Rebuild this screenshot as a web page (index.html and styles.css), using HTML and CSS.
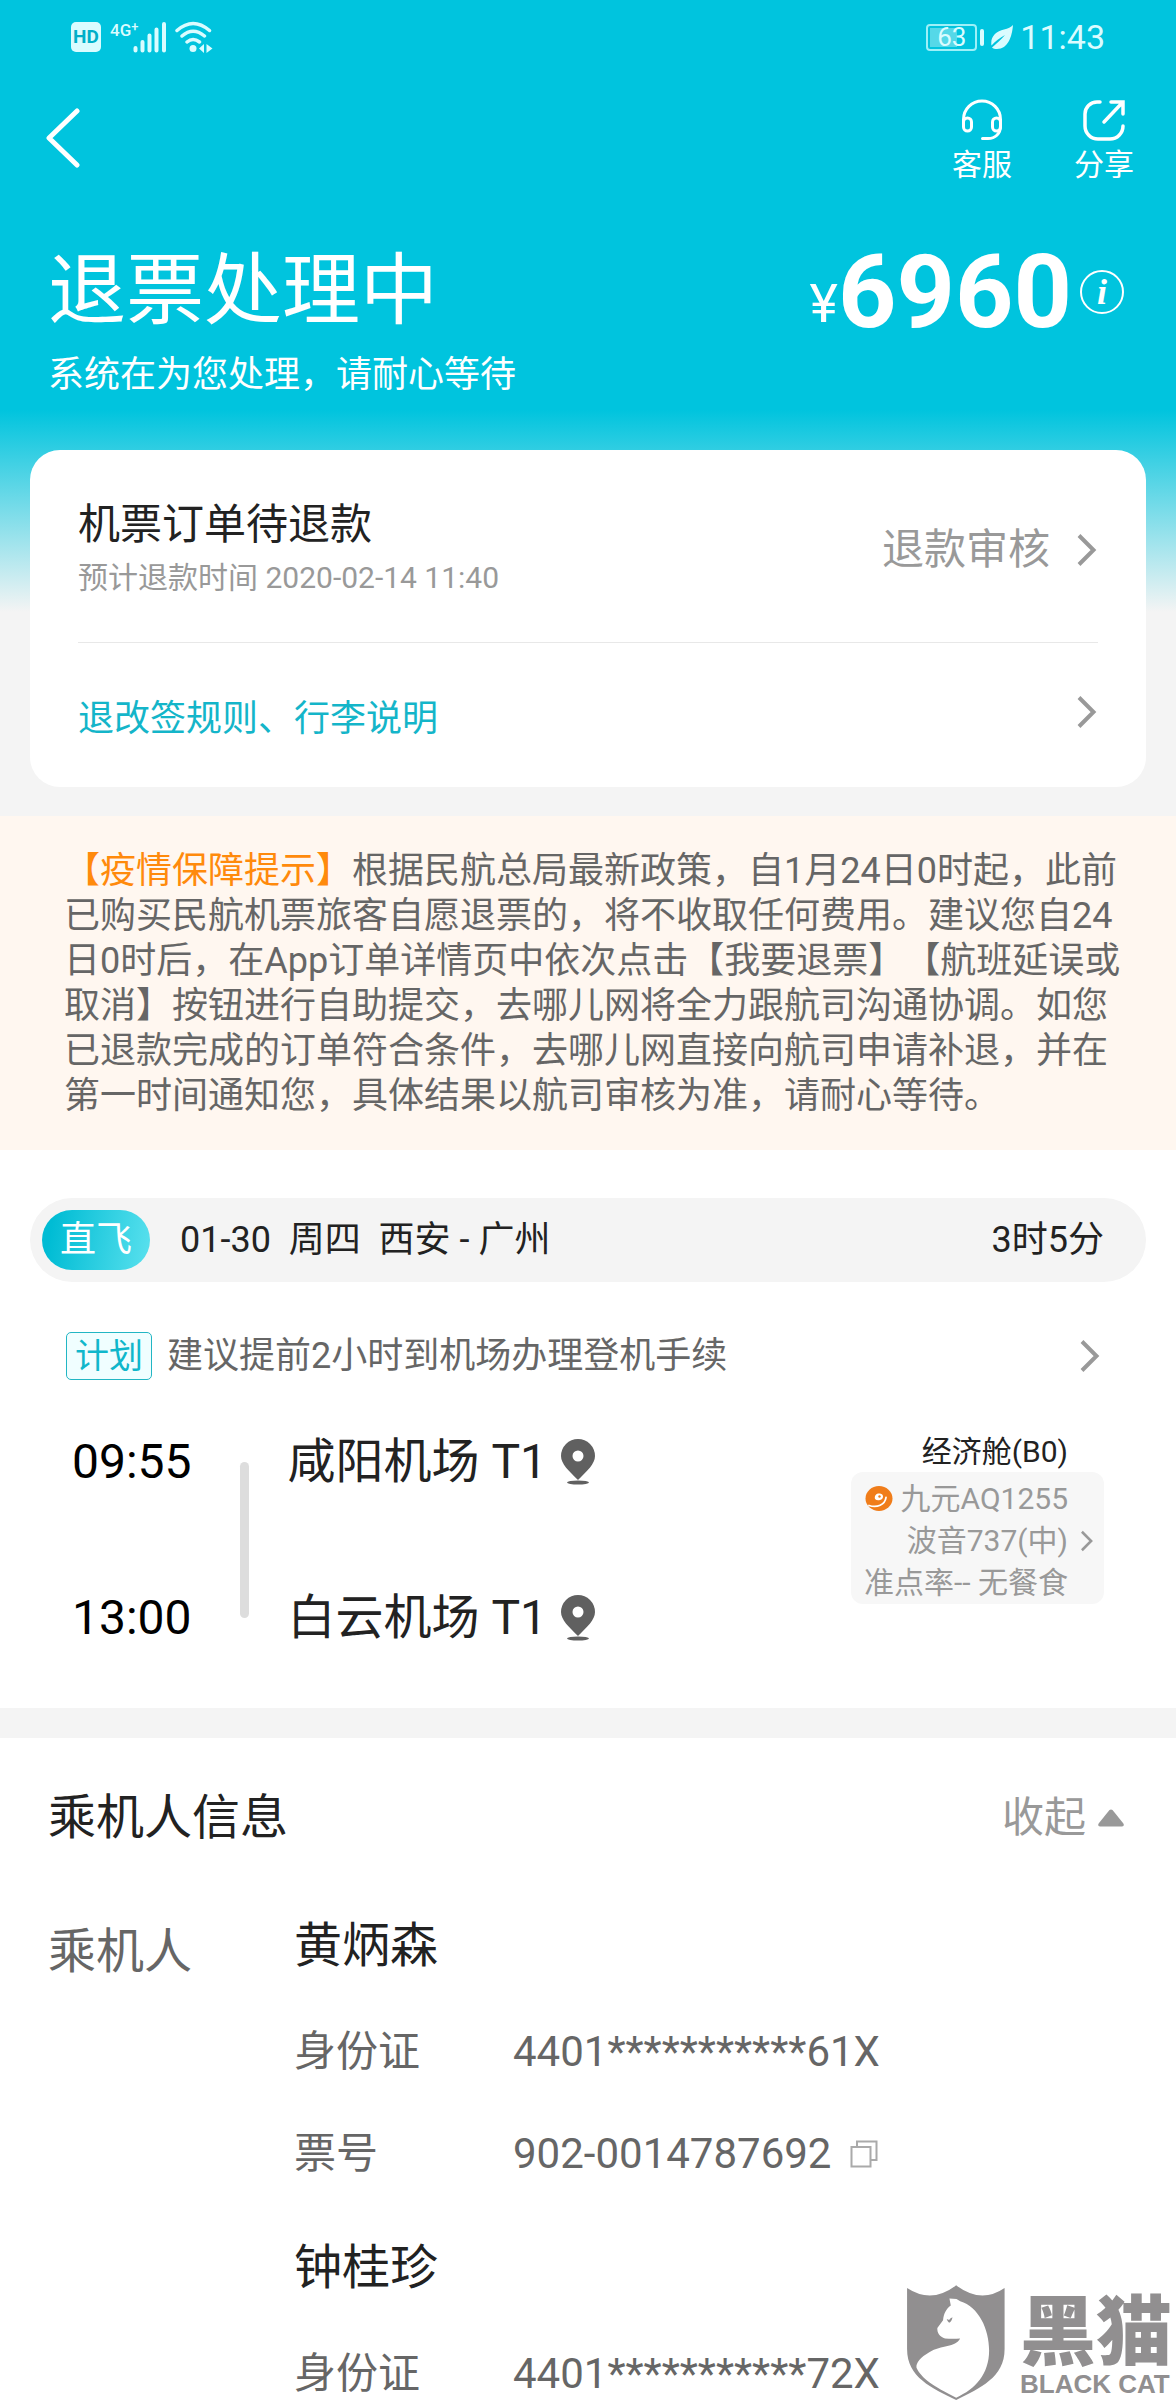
FILE: index.html
```html
<!DOCTYPE html>
<html lang="zh-CN">
<head>
<meta charset="utf-8">
<meta name="viewport" content="width=device-width, initial-scale=1">
<title>退票处理中</title>
<link rel="stylesheet" href="styles.css">
</head>
<body>
<svg class="defs" aria-hidden="true">
  <symbol id="chevron" viewBox="0 0 22 34"><path d="M3 2.500 17.500 17 3 31.500" fill="none" stroke="currentColor" stroke-width="4"/></symbol>
  <symbol id="pin" viewBox="0 0 34 46">
    <path fill="currentColor" fill-rule="evenodd" d="M17 0A17 17 0 0 0 0 17C0 25 8 32 17 41C26 32 34 25 34 17A17 17 0 0 0 17 0ZM17 11.500A5.500 5.500 0 1 1 17 22.500A5.500 5.500 0 1 1 17 11.500Z"/>
    <ellipse cx="17" cy="43.500" rx="11" ry="2" fill="currentColor"/>
  </symbol>
</svg>
<main class="page">
  <header class="top">
    <div class="status">
      <div class="status-group">
        <span class="hd">HD</span>
        <span class="net">4G<sup>+</sup></span>
        <svg class="signal" viewBox="0 0 34 32" aria-hidden="true"><g stroke="currentColor" stroke-width="4" stroke-linecap="round"><path d="M2.500 27v2.500M9.500 21v8.500M16.500 14.500v15M23.500 8.500v21M31 3v26.500"/></g></svg>
        <svg class="wifi" viewBox="0 0 38 32" aria-hidden="true"><g fill="none" stroke="currentColor" stroke-width="3.500" stroke-linecap="round"><path d="M2 9.500Q18 -4.500 34.500 9.500M7 15Q18 5.500 29.500 15M12 21Q18 16 24.500 21"/></g><circle cx="18" cy="27.500" r="3.500" fill="currentColor"/><path fill="currentColor" d="M24 27.500 29 23v9zM31.500 23v9l6-4.500z"/></svg>
      </div>
      <div class="status-group">
        <span class="battery"><span class="battery-level">63</span></span>
        <svg class="leaf" viewBox="0 0 22 24" aria-hidden="true"><path fill="currentColor" d="M22 0C21 12 17 24 6 24C4 24 2 23.500 1 22.500C5 19 10 15 14 10C9 13 4 16 .5 20.500C-1 12 5 6 13 4.500C17 3.500 20 2 22 0Z"/></svg>
        <time class="clock">11:43</time>
      </div>
    </div>
    <nav class="nav">
      <button class="back" type="button" aria-label="返回"><svg viewBox="0 0 34 60" aria-hidden="true"><path d="M31 3 3 30 31 57" fill="none" stroke="currentColor" stroke-width="5" stroke-linecap="round" stroke-linejoin="round"/></svg></button>
      <div class="actions">
        <button class="action" type="button">
          <svg viewBox="0 0 42 42" aria-hidden="true"><g fill="none" stroke="currentColor" stroke-width="3" stroke-linecap="round"><path d="M2.500 24V20.500A18.500 18.500 0 0 1 39.500 20.500V27C39.500 35 34 39.500 27 39.500H21.500"/><rect x="2.500" y="19" width="8" height="13" rx="4"/><rect x="31.500" y="19" width="8" height="13" rx="4"/></g></svg>
          <span>客服</span>
        </button>
        <button class="action" type="button">
          <svg viewBox="0 0 42 42" aria-hidden="true"><g fill="none" stroke="currentColor" stroke-width="3.500" stroke-linecap="round"><path d="M17 3H14A12 12 0 0 0 2 15V27A13 13 0 0 0 15 40H27A13 13 0 0 0 40 27M28 3H40V15M39 4 21 23"/></g></svg>
          <span>分享</span>
        </button>
      </div>
    </nav>
    <section class="hero">
      <div class="hero-main">
        <h1 class="hero-title">退票处理中</h1>
        <div class="price">
          <span class="currency">¥</span><span class="amount">6960</span>
          <button class="info" type="button" aria-label="费用说明">i</button>
        </div>
      </div>
      <p class="hero-sub">系统在为您处理，请耐心等待</p>
    </section>
    <section class="card">
      <a class="refund" href="#refund">
        <span class="refund-text">
          <span class="refund-title">机票订单待退款</span>
          <span class="refund-time">预计退款时间 2020-02-14 11:40</span>
        </span>
        <span class="refund-state">退款审核<svg class="chevron"><use href="#chevron"/></svg></span>
      </a>
      <a class="rules" href="#rules"><span>退改签规则、行李说明</span><svg class="chevron"><use href="#chevron"/></svg></a>
    </section>
  </header>

  <p class="notice"><strong>【疫情保障提示】</strong>根据民航总局最新政策，自1月24日0时起，此前已购买民航机票旅客自愿退票的，将不收取任何费用。建议您自24日0时后，在App订单详情页中依次点击【我要退票】【航班延误或取消】按钮进行自助提交，去哪儿网将全力跟航司沟通协调。如您已退款完成的订单符合条件，去哪儿网直接向航司申请补退，并在第一时间通知您，具体结果以航司审核为准，请耐心等待。</p>

  <section class="flight">
    <div class="leg">
      <span class="leg-type">直飞</span>
      <span class="leg-info">01-30&nbsp; 周四&nbsp; 西安 - 广州</span>
      <span class="leg-time">3时5分</span>
    </div>
    <a class="tip" href="#plan">
      <span class="tag">计划</span>
      <span class="tip-text">建议提前2小时到机场办理登机手续</span>
      <svg class="chevron"><use href="#chevron"/></svg>
    </a>
    <div class="route">
      <div class="stops">
        <time>09:55</time>
        <time>13:00</time>
      </div>
      <span class="track"></span>
      <div class="stops airports">
        <a href="#xianyang">咸阳机场 T1<svg class="pin"><use href="#pin"/></svg></a>
        <a href="#baiyun">白云机场 T1<svg class="pin"><use href="#pin"/></svg></a>
      </div>
      <div class="plane">
        <span class="cabin">经济舱(B0)</span>
        <a class="plane-box" href="#plane">
          <span class="plane-lines">
            <span class="carrier"><svg viewBox="0 0 28 28" aria-hidden="true"><ellipse cx="14" cy="13.500" rx="13.500" ry="12.500" fill="#f07d1a"/><path d="M4 20.500C12 23 20 20 21 12.500" fill="none" stroke="#fff" stroke-width="1.800" stroke-linecap="round"/><path d="M10 14C9 10 12 8 15 8.500C19 9 19 14 15 15Q12 16 10 14Z" fill="#fff"/><circle cx="14.500" cy="11.500" r="1.200" fill="#f07d1a"/></svg>九元AQ1255</span>
            <span>波音737(中)</span>
            <span>准点率-- 无餐食</span>
          </span>
          <svg class="chevron small"><use href="#chevron"/></svg>
        </a>
      </div>
    </div>
  </section>

  <section class="passengers">
    <div class="passengers-head">
      <h2>乘机人信息</h2>
      <button class="fold" type="button">收起<svg viewBox="0 0 26 18" aria-hidden="true"><path fill="currentColor" d="M11.500 1Q13 0 14.500 1L25 14Q27 17 24 17.500H2Q-1 17 1 14Z"/></svg></button>
    </div>
    <div class="passengers-body">
      <span class="passengers-label">乘机人</span>
      <div class="people">
        <article class="person">
          <h3>黄炳森</h3>
          <dl>
            <dt>身份证</dt><dd>4401***********61X</dd>
            <dt>票号</dt><dd>902-0014787692<button class="copy" type="button" aria-label="复制票号"><svg viewBox="0 0 28 28" aria-hidden="true"><path d="M7 7V1.500H26.500V20H21M1.500 7H20.500V26.500H1.500Z" fill="none" stroke="currentColor" stroke-width="2"/></svg></button></dd>
          </dl>
        </article>
        <article class="person">
          <h3>钟桂珍</h3>
          <dl>
            <dt>身份证</dt><dd>4401***********72X</dd>
          </dl>
        </article>
      </div>
    </div>
  </section>

  <aside class="watermark">
    <svg viewBox="82 75 291 342" aria-hidden="true">
      <path fill="#918f90" d="M82 84Q155 132 228 76Q302 132 372 84V265C372 350 300 380 228 417C155 380 82 350 82 265Z"/>
      <path fill="#fff" d="M208 115 212 136C198 146 191 160 189 180L172 203C171 218 179 229 195 234Q218 236 240 234C225 262 185 252 148 275C122 290 108 306 110 321C125 353 160 376 228 410C285 385 326 340 326 270C326 205 295 140 240 123L229 117Z"/>
      <path fill="#918f90" d="M200 176Q202 184 207 187Q215 184 217 171Q209 174 207 179Z"/>
    </svg>
    <span class="brand"><b>黑猫</b><small>BLACK CAT</small></span>
  </aside>
</main>
</body>
</html>
```
FILE: styles.css
```css
* { box-sizing: border-box; }

body {
  margin: 0;
  background: #f4f4f4;
  color: #222;
  font-family: Roboto, "Noto Sans CJK SC", sans-serif;
  font-size: 36px;
  line-height: 48px;
}

h1, h2, h3, p, dl, dd { margin: 0; font-weight: 400; }
a { color: inherit; text-decoration: none; }
button { padding: 0; border: 0; background: none; color: inherit; font: inherit; }
svg { display: block; flex: none; }
.defs { position: absolute; width: 0; height: 0; }

.page {
  position: relative;
  display: flex;
  flex-direction: column;
  min-height: 100vh;
}

.chevron { width: 22px; height: 34px; color: #999; }
.chevron.small { width: 14px; height: 22px; }

/* header */
.top {
  padding-bottom: 29px;
  background: linear-gradient(#00c4de 410px, #f4f4f4 612px);
  color: #fff;
}
.status {
  display: flex;
  justify-content: space-between;
  align-items: center;
  height: 74px;
  padding: 0 71px;
  color: #dafcff;
}
.status-group { display: flex; align-items: center; }
.hd {
  width: 30px;
  border-radius: 5px;
  background: #dafcff;
  color: #00afc8;
  font-size: 19px;
  font-weight: 700;
  line-height: 30px;
  text-align: center;
}
.net {
  display: flex;
  align-self: flex-start;
  margin-left: 9px;
  font-size: 17px;
  font-weight: 500;
  line-height: 18px;
}
.net sup { font-size: 13px; line-height: 12px; vertical-align: baseline; }
.signal { width: 34px; height: 32px; margin-left: -5px; }
.wifi { width: 38px; height: 32px; margin-left: 8px; }
.battery {
  position: relative;
  width: 51px;
  margin-right: 14px;
  padding: 2px;
  border: 2px solid #9df0f8;
  border-radius: 4px;
}
.battery::after {
  content: "";
  position: absolute;
  top: 3px;
  right: -9px;
  width: 4px;
  height: 17px;
  border-radius: 2px;
  background: #dafcff;
}
.battery-level {
  display: block;
  background: linear-gradient(90deg, #55d8e8 63%, transparent 63%);
  font-size: 26px;
  line-height: 19px;
  text-align: center;
}
.leaf { width: 22px; height: 24px; }
.clock { margin-left: 7px; font-size: 34px; }

.nav {
  display: flex;
  justify-content: space-between;
  align-items: flex-start;
  padding: 25px 42px 0 46px;
}
.back { margin-top: 9px; }
.back svg { width: 34px; height: 60px; }
.actions { display: flex; gap: 62px; }
.action {
  display: flex;
  flex-direction: column;
  align-items: center;
  gap: 6px;
  font-size: 30px;
  line-height: 36px;
}
.action svg { width: 42px; height: 42px; }

.hero { padding: 61px 52px 51px 48px; }
.hero-main { display: flex; justify-content: space-between; }
.hero-title { font-size: 78px; line-height: 96px; }
.hero-sub { margin-top: 11px; }
.price { display: flex; align-items: center; }
.currency { align-self: flex-end; font-size: 54px; line-height: 72px; }
.amount { font-size: 102px; font-weight: 700; line-height: 96px; }
.info {
  width: 44px;
  height: 44px;
  margin-left: 8px;
  border: 2px solid #fff;
  border-radius: 50%;
  font: italic 700 36px/38px "Liberation Serif", serif;
  text-align: center;
}

.card {
  margin: 0 30px;
  padding: 0 48px;
  border-radius: 30px;
  background: #fff;
}
.refund {
  display: flex;
  justify-content: space-between;
  align-items: center;
  padding: 48px 0 40px;
  border-bottom: 1px solid #e8e8e8;
}
.refund-text { display: flex; flex-direction: column; gap: 2px; }
.refund-title { color: #222; font-size: 42px; line-height: 54px; }
.refund-time { color: #999; font-size: 30px; line-height: 48px; }
.refund-state {
  display: flex;
  align-items: center;
  gap: 26px;
  color: #999;
  font-size: 42px;
}
.rules {
  display: flex;
  justify-content: space-between;
  align-items: flex-start;
  padding: 52px 0 44px;
  color: #14b5c9;
}

.notice {
  padding: 33px 48px 31px 64px;
  background: #fff7f0;
  color: #666;
  line-height: 45px;
  text-spacing-trim: space-all;
}
.notice strong { color: #ff8a0c; font-weight: 400; }

/* flight */
.flight { padding: 48px 30px 60px; background: #fff; }
.leg {
  display: flex;
  align-items: center;
  padding: 12px 42px 12px 12px;
  border-radius: 42px;
  background: #f4f4f4;
}
.leg-type {
  width: 108px;
  border-radius: 30px;
  background: linear-gradient(100deg, #00bcd4 10%, #5ae1ee);
  color: #fff;
  line-height: 60px;
  text-align: center;
}
.leg-info { flex: 1; margin-left: 30px; }
.tip {
  display: flex;
  align-items: center;
  margin-top: 50px;
  padding: 0 45px 0 36px;
  color: #666;
}
.tag {
  width: 86px;
  border: 1px solid #22b6c4;
  border-radius: 5px;
  background: #f0feff;
  color: #10b7cb;
  font-size: 34px;
  line-height: 46px;
  text-align: center;
}
.tip-text { flex: 1; margin-left: 15px; }

.route { display: flex; padding: 52px 42px 0; }
.stops {
  display: flex;
  flex-direction: column;
  gap: 96px;
  color: #000;
  font-size: 48px;
  line-height: 60px;
}
.track {
  width: 9px;
  margin: 30px 39px 30px 48px;
  border-radius: 5px;
  background: #ddd;
}
.airports { color: #222; }
.airports a { display: flex; align-items: center; }
.pin { width: 34px; height: 46px; margin-left: 14px; color: #606060; }
.plane {
  display: flex;
  flex-direction: column;
  align-items: flex-end;
  margin-left: auto;
  font-size: 30px;
}
.cabin { margin-right: 36px; line-height: 40px; }
.plane-box {
  display: flex;
  align-items: center;
  gap: 12px;
  padding: 6px 10px 0 13px;
  border-radius: 12px;
  background: #f7f7f7;
  color: #999;
  line-height: 42px;
}
.plane-lines {
  display: flex;
  flex-direction: column;
  align-items: flex-end;
}
.carrier { display: flex; align-items: center; gap: 8px; }
.carrier svg { width: 28px; height: 28px; }

/* passengers */
.passengers {
  flex: 1;
  margin-top: 30px;
  padding: 50px 52px 0 48px;
  background: #fff;
}
.passengers-head {
  display: flex;
  justify-content: space-between;
  align-items: center;
}
h2, h3, .passengers-label { font-size: 48px; line-height: 60px; }
.fold {
  display: flex;
  align-items: center;
  gap: 12px;
  color: #999;
  font-size: 42px;
}
.fold svg { width: 26px; height: 18px; }
.passengers-body {
  display: flex;
  align-items: flex-start;
  margin-top: 68px;
}
.passengers-label { width: 246px; padding-top: 6px; color: #666; }
.people { display: flex; flex: 1; flex-direction: column; gap: 58px; }
.person dl {
  display: grid;
  grid-template-columns: 219px 1fr;
  row-gap: 50px;
  margin-top: 50px;
  color: #666;
  font-size: 42px;
  line-height: 52px;
}
.person dd { display: flex; align-items: center; }
.copy { margin-left: 19px; color: #aaa; }
.copy svg { width: 28px; height: 28px; }

.watermark {
  position: absolute;
  right: 0;
  bottom: 0;
  display: flex;
  gap: 15px;
  color: #918f90;
}
.watermark svg { width: 98px; height: 115px; }
.brand {
  display: flex;
  flex-direction: column;
  justify-content: flex-end;
  width: 156px;
  padding-bottom: 3px;
}
.brand b {
  font-size: 76px;
  font-weight: 900;
  line-height: 76px;
}
.brand small {
  font-family: "Liberation Sans", sans-serif;
  font-size: 26px;
  font-weight: 700;
  line-height: 26px;
  white-space: nowrap;
}
```
